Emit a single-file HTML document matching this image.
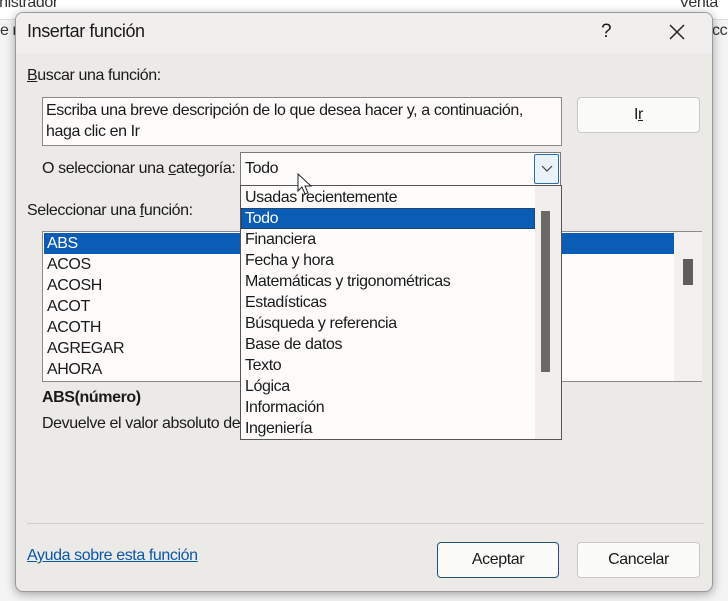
<!DOCTYPE html>
<html><head><meta charset="utf-8"><style>
*{box-sizing:border-box;margin:0;padding:0}
body{width:728px;height:601px;overflow:hidden;background:#f4f4f4;font-family:"Liberation Sans",sans-serif;font-size:16px;letter-spacing:-0.4px;color:#1a1a1a;position:relative}
.a{position:absolute;white-space:nowrap}
.dlg{position:absolute;left:15px;top:12px;width:698px;height:580px;background:#ebeae7;border:1px solid #9a9a9a;border-radius:8px;box-shadow:0 2px 10px rgba(0,0,0,.35);overflow:hidden}
.tb{position:absolute;left:0;top:0;width:100%;height:40px;background:#f1efed}
.box{background:#fdfcfb;border:1px solid #7a7a7a}
.btn{background:#fbfbfa;border:1px solid #c9c9c9;border-radius:4px;text-align:center;line-height:33px}
.it{position:absolute;left:4px;height:21px;line-height:21px}
</style></head><body>
<div class="a" style="left:0;top:0;width:728px;height:20px;background:#fff;border-bottom:1px solid #ddd"></div>
<div class="a" style="left:-4px;top:-6px;color:#333">inistrador</div>
<div class="a" style="left:0;top:22px;color:#333">e r</div>
<div class="a" style="left:679px;top:-6px;color:#333">Venta</div>
<div class="a" style="left:712px;top:22px;color:#333">cci</div>
<div class="dlg">
<div class="tb"></div>
<div class="a" style="left:11px;top:8px;font-size:18px">Insertar función</div>
<div class="a" style="left:585px;top:8px;font-size:19px">?</div>
<svg class="a" style="left:652px;top:10px" width="18" height="18"><path d="M2 2L16 16M16 2L2 16" stroke="#222" stroke-width="1.5"/></svg>
<div class="a" style="left:11px;top:54px"><u>B</u>uscar una función:</div>
<div class="a box" style="left:26px;top:84px;width:520px;height:49px;border-color:#8a8a8a"></div>
<div class="a" style="left:30px;top:87px;line-height:21px">Escriba una breve descripción de lo que desea hacer y, a continuación,<br>haga clic en Ir</div>
<div class="a btn" style="left:561px;top:84px;width:123px;height:36px">I<u>r</u></div>
<div class="a" style="left:26px;top:147px">O seleccionar una <u>c</u>ategoría:</div>
<div class="a box" style="left:224px;top:139px;width:321px;height:34px"></div>
<div class="a" style="left:229px;top:147px">Todo</div>
<div class="a" style="left:518px;top:141px;width:25px;height:30px;background:#eaf2fb;border:1px solid #2a6cb0;border-radius:2px"></div>
<svg class="a" style="left:524px;top:151px" width="14" height="10"><path d="M2 2L7 7L12 2" stroke="#444" fill="none" stroke-width="1.2"/></svg>
<div class="a" style="left:11px;top:189px">Seleccionar una <u>f</u>unción:</div>
<div class="a box" style="left:26px;top:218px;width:660px;height:151px;border-color:#8a8a8a">
<div class="a" style="left:1px;top:1px;width:630px;height:21px;background:#0b5cb5"></div>
<div class="it" style="top:1px;color:#fff">ABS</div>
<div class="it" style="top:22px">ACOS</div>
<div class="it" style="top:43px">ACOSH</div>
<div class="it" style="top:64px">ACOT</div>
<div class="it" style="top:85px">ACOTH</div>
<div class="it" style="top:106px">AGREGAR</div>
<div class="it" style="top:127px">AHORA</div>
<div class="a" style="left:631px;top:0;width:28px;height:149px;background:#f2f1ef"></div>
<div class="a" style="left:640px;top:27px;width:10px;height:26px;background:#5f5e5c"></div>
</div>
<div class="a" style="left:26px;top:376px;font-weight:bold">ABS(número)</div>
<div class="a" style="left:26px;top:402px">Devuelve el valor absoluto de</div>
<div class="a" style="left:11px;top:510px;width:677px;height:1px;background:#cfcfcf"></div>
<div class="a" style="left:11px;top:534px;color:#0a56a8;text-decoration:underline">Ayuda sobre esta función</div>
<div class="a btn" style="left:421px;top:529px;width:122px;height:36px;border-color:#24507e">Aceptar</div>
<div class="a btn" style="left:561px;top:529px;width:123px;height:36px">Cancelar</div>
<div class="a box" style="left:224px;top:172px;width:322px;height:255px;background:#fdfcfb;border-color:#555">
<div class="a" style="left:0;top:22px;width:294px;height:21px;background:#0b5cb5;border:1px dotted #333"></div>
<div class="it" style="top:1px">Usadas recientemente</div>
<div class="it" style="top:22px;color:#fff">Todo</div>
<div class="it" style="top:43px">Financiera</div>
<div class="it" style="top:64px">Fecha y hora</div>
<div class="it" style="top:85px">Matemáticas y trigonométricas</div>
<div class="it" style="top:106px">Estadísticas</div>
<div class="it" style="top:127px">Búsqueda y referencia</div>
<div class="it" style="top:148px">Base de datos</div>
<div class="it" style="top:169px">Texto</div>
<div class="it" style="top:190px">Lógica</div>
<div class="it" style="top:211px">Información</div>
<div class="it" style="top:232px">Ingeniería</div>
<div class="a" style="left:294px;top:0;width:26px;height:253px;background:#f0efed"></div>
<div class="a" style="left:300px;top:25px;width:9px;height:161px;background:#6b6966"></div>
</div>
<svg class="a" style="left:281px;top:160px" width="16" height="24"><path d="M1 1L1 18L5 14L8 21L11 20L8 13L14 13Z" fill="#fff" stroke="#222" stroke-width="1"/></svg>
</div>
</body></html>
